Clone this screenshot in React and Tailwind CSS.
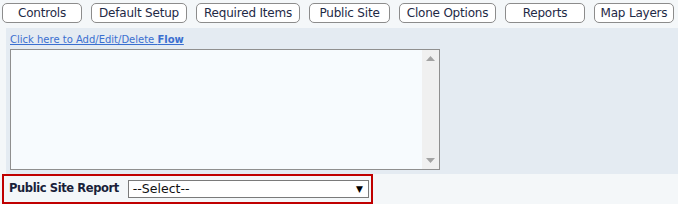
import React from 'react';

const tabs = [
    { label: "Controls", w: "w-[80px]" },
    { label: "Default Setup", w: "w-[96px]" },
    { label: "Required Items", w: "w-[104px]" },
    { label: "Public Site", w: "w-[81px]" },
    { label: "Clone Options", w: "w-[97px]" },
    { label: "Reports", w: "w-[80px]" },
    { label: "Map Layers", w: "w-[80px]" },
];

const ScrollArrow = ({ up }) => (
    <svg width="9" height="5" viewBox="0 0 9 5">
        <polygon points={up ? "4.5,0 9,5 0,5" : "0,0 9,0 4.5,5"} fill="#a3a3a3" />
    </svg>
);

export default function App() {
    return (
        <div className="w-[678px] h-[204px] bg-[#f4f7f9] font-['DejaVu_Sans',Verdana,sans-serif] overflow-hidden">
            {/* top buttons */}
            <div className="flex gap-[9px] pl-[2px] pt-[3px] h-[28px]">
                {tabs.map(t => (
                    <button
                        key={t.label}
                        className={`${t.w} h-[20px] shrink-0 rounded-[5px] border border-[#8c8c8c] bg-white text-[12px] tracking-[-0.2px] leading-none text-[#1e2946]`}
                    >
                        {t.label}
                    </button>
                ))}
            </div>

            {/* flow panel */}
            <div className="ml-[6px] h-[146px] bg-[#e4ebf2] pl-[4px] pt-[5px]">
                <a href="#" className="block text-[10px] leading-[14px] text-[#3a6fd0] underline">
                    Click here to Add/Edit/Delete <b className="font-bold">Flow</b>
                </a>
                <div className="mt-[2px] w-[430px] h-[121px] border border-[#8f8f8f] bg-[#f7fbfe] flex justify-end">
                    <div className="w-[17px] h-full bg-[#f0f0f0] flex flex-col items-center justify-between py-[6px]">
                        <ScrollArrow up />
                        <ScrollArrow />
                    </div>
                </div>
            </div>

            {/* report selector */}
            <div className="ml-[2px] w-[371px] h-[30px] border-2 border-[#c00000] flex items-center pl-[5px] gap-[9px]">
                <span className="text-[11.5px] tracking-[-0.4px] font-bold text-[#1a1f3a] whitespace-nowrap">Public Site Report</span>
                <div className="w-[241px] h-[18px] border border-[#7a7a7a] bg-white flex items-center justify-between pl-[4px] pr-[5px]">
                    <span className="text-[12.5px] leading-none text-[#111]">--Select--</span>
                    <span className="text-[9px] leading-none text-black">▼</span>
                </div>
            </div>
        </div>
    );
}
